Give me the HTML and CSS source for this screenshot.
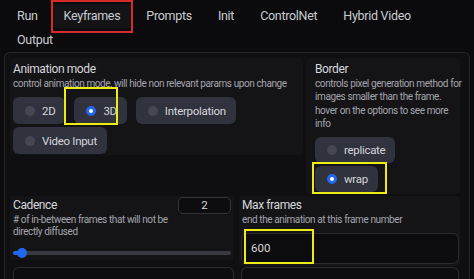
FILE: index.html
```html
<!DOCTYPE html>
<html lang="en">
<head>
    <meta charset="UTF-8">
    <title>Deforum - Keyframes</title>
    <link rel="stylesheet" href="styles.css">
</head>
<body>
    <div class="tabs">
        <div class="tab">Run</div>
        <div class="tab active">Keyframes<span class="mark-red"></span></div>
        <div class="tab">Prompts</div>
        <div class="tab">Init</div>
        <div class="tab">ControlNet</div>
        <div class="tab">Hybrid Video</div>
        <div class="tab">Output</div>
    </div>

    <div class="panel">
        <div class="row">
            <div class="block block-anim">
                <div class="label">Animation mode</div>
                <div class="desc">control animation mode, will hide non relevant params upon change</div>
                <div class="options">
                    <label class="pill"><span class="radio"></span>2D</label>
                    <label class="pill"><span class="radio checked"></span>3D</label>
                    <label class="pill"><span class="radio"></span>Interpolation</label>
                    <label class="pill"><span class="radio"></span>Video Input</label>
                </div>
                <span class="mark-yellow mark-3d"></span>
            </div>
            <div class="block block-border">
                <div class="label">Border</div>
                <div class="desc desc-tall">controls pixel generation method for<br>images smaller than the frame.<br>hover on the options to see more<br>info</div>
                <div class="options options-col">
                    <label class="pill"><span class="radio"></span>replicate</label>
                    <label class="pill"><span class="radio checked"></span>wrap</label>
                </div>
                <span class="mark-yellow mark-wrap"></span>
            </div>
        </div>

        <div class="row row-2">
            <div class="block block-cadence">
                <div class="head">
                    <div class="label">Cadence</div>
                    <div class="num">2</div>
                </div>
                <div class="desc desc-cad"># of in-between frames that will not be<br>directly diffused</div>
                <div class="slider">
                    <div class="track"><div class="fill" style="width: 9px"></div></div>
                    <div class="thumb" style="left: 4px"></div>
                </div>
            </div>
            <div class="block block-max">
                <div class="label">Max frames</div>
                <div class="desc">end the animation at this frame number</div>
                <div class="field">600</div>
                <span class="mark-yellow mark-600"></span>
            </div>
        </div>

        <div class="row row-3">
            <div class="stub stub-left"></div>
            <div class="stub stub-right"></div>
        </div>
    </div>
</body>
</html>
```

FILE: styles.css
```css
body {
    margin: 0;
    background: #0b0b0d;
    font-family: Roboto, "Liberation Sans", sans-serif;
    color: #d2d4da;
    overflow: hidden;
}
.tabs {
    display: flex;
    flex-wrap: wrap;
    margin: 0 4px;
    padding-top: 4px;
}
.tab {
    position: relative;
    padding: 0 13px;
    line-height: 24px;
    font-size: 12.5px;
    letter-spacing: -0.3px;
    color: #c9cbd2;
}
.tab.active {
    background: #141417;
}
.mark-red {
    position: absolute;
    left: 0;
    right: 0;
    top: -4px;
    bottom: -5px;
    border: 2px solid #d52b2b;
}
.panel {
    margin: 0 4px;
    padding: 5px 9px 0 5px;
    height: 240px;
    background: #0f0f11;
    border: 1px solid #26262b;
    border-bottom: none;
    border-radius: 6px 6px 0 0;
}
.row {
    display: flex;
    align-items: flex-start;
    gap: 3px;
}
.block {
    position: relative;
    box-sizing: border-box;
    min-width: 0;
    background: #141417;
    border-radius: 4px;
}
.label {
    font-size: 12px;
    letter-spacing: -0.4px;
    line-height: 16px;
    color: #d6d7dc;
}
.desc {
    font-size: 10px;
    letter-spacing: -0.4px;
    line-height: 13px;
    color: #a4a6ad;
    white-space: nowrap;
}
.block-anim {
    flex: none;
    width: 293px;
    height: 97px;
    padding: 3px 3px 0;
}
.block-border {
    flex: 1;
    height: 136px;
    padding: 3px 8px 0 9px;
}
.desc-tall {
    line-height: 13.4px;
}
.options {
    display: flex;
    flex-wrap: wrap;
    gap: 3px 9px;
    margin-top: 7px;
}
.options-col {
    flex-direction: column;
    align-items: flex-start;
    margin-top: 6px;
}
.pill {
    display: flex;
    align-items: center;
    gap: 7px;
    height: 27px;
    box-sizing: border-box;
    padding: 0 10px 0 12px;
    background: #30323d;
    border-radius: 6px;
    font-size: 11.5px;
    letter-spacing: -0.3px;
    color: #d4d6dc;
}
.options-col .pill {
    height: 26px;
}
.radio {
    width: 10px;
    height: 10px;
    border-radius: 50%;
    background: #454752;
    box-sizing: border-box;
}
.radio.checked {
    background: #fff;
    border: 3px solid #2167f0;
}
.mark-yellow {
    position: absolute;
    border: 2px solid #ecec12;
    box-sizing: border-box;
}
.mark-3d {
    left: 54px;
    top: 29px;
    width: 54px;
    height: 38px;
}
.mark-wrap {
    left: 6px;
    top: 104px;
    width: 75px;
    height: 32px;
}
.mark-600 {
    left: 5px;
    top: 33px;
    width: 70px;
    height: 35px;
}
.row-2 {
    margin-top: 2px;
    gap: 5px;
}
.block-cadence {
    flex: none;
    width: 224px;
    height: 64px;
    padding: 1px 3px 0;
}
.head {
    display: flex;
    justify-content: space-between;
    align-items: flex-start;
}
.num {
    width: 53px;
    height: 17px;
    box-sizing: border-box;
    border: 1px solid #33343a;
    border-radius: 5px;
    background: #0d0d0f;
    font-size: 11.5px;
    line-height: 15px;
    text-align: center;
    color: #d6d7dc;
}
.desc-cad {
    line-height: 12px;
}
.slider {
    position: relative;
    height: 10px;
    margin-top: 10px;
}
.track {
    position: absolute;
    left: 0;
    right: 0;
    top: 3px;
    height: 4px;
    border-radius: 2px;
    background: #383943;
}
.fill {
    height: 100%;
    border-radius: 2px;
    background: #2167f0;
}
.thumb {
    position: absolute;
    top: 0;
    width: 10px;
    height: 10px;
    border-radius: 50%;
    background: #2167f0;
}
.block-max {
    flex: 1;
    height: 70px;
    padding: 1px 1px 0 2px;
}
.block-max .label,
.block-max .desc {
    margin-left: 1px;
}
.block-max .desc {
    line-height: 14px;
}
.field {
    margin-top: 6px;
    height: 31px;
    box-sizing: border-box;
    padding-left: 9px;
    border: 1px solid #2a2a30;
    border-radius: 6px;
    background: #0c0c0e;
    font-size: 11.5px;
    line-height: 29px;
    color: #d6d7dc;
}
.row-3 {
    margin-top: 1px;
    gap: 7px;
}
.stub {
    height: 20px;
    border: 1px solid #2a2a30;
    border-bottom: none;
    border-radius: 6px 6px 0 0;
    background: #0d0d0f;
}
.stub-left {
    flex: none;
    margin-left: 3px;
    width: 219px;
}
.stub-right {
    flex: 1;
    margin-right: 1px;
}
```
